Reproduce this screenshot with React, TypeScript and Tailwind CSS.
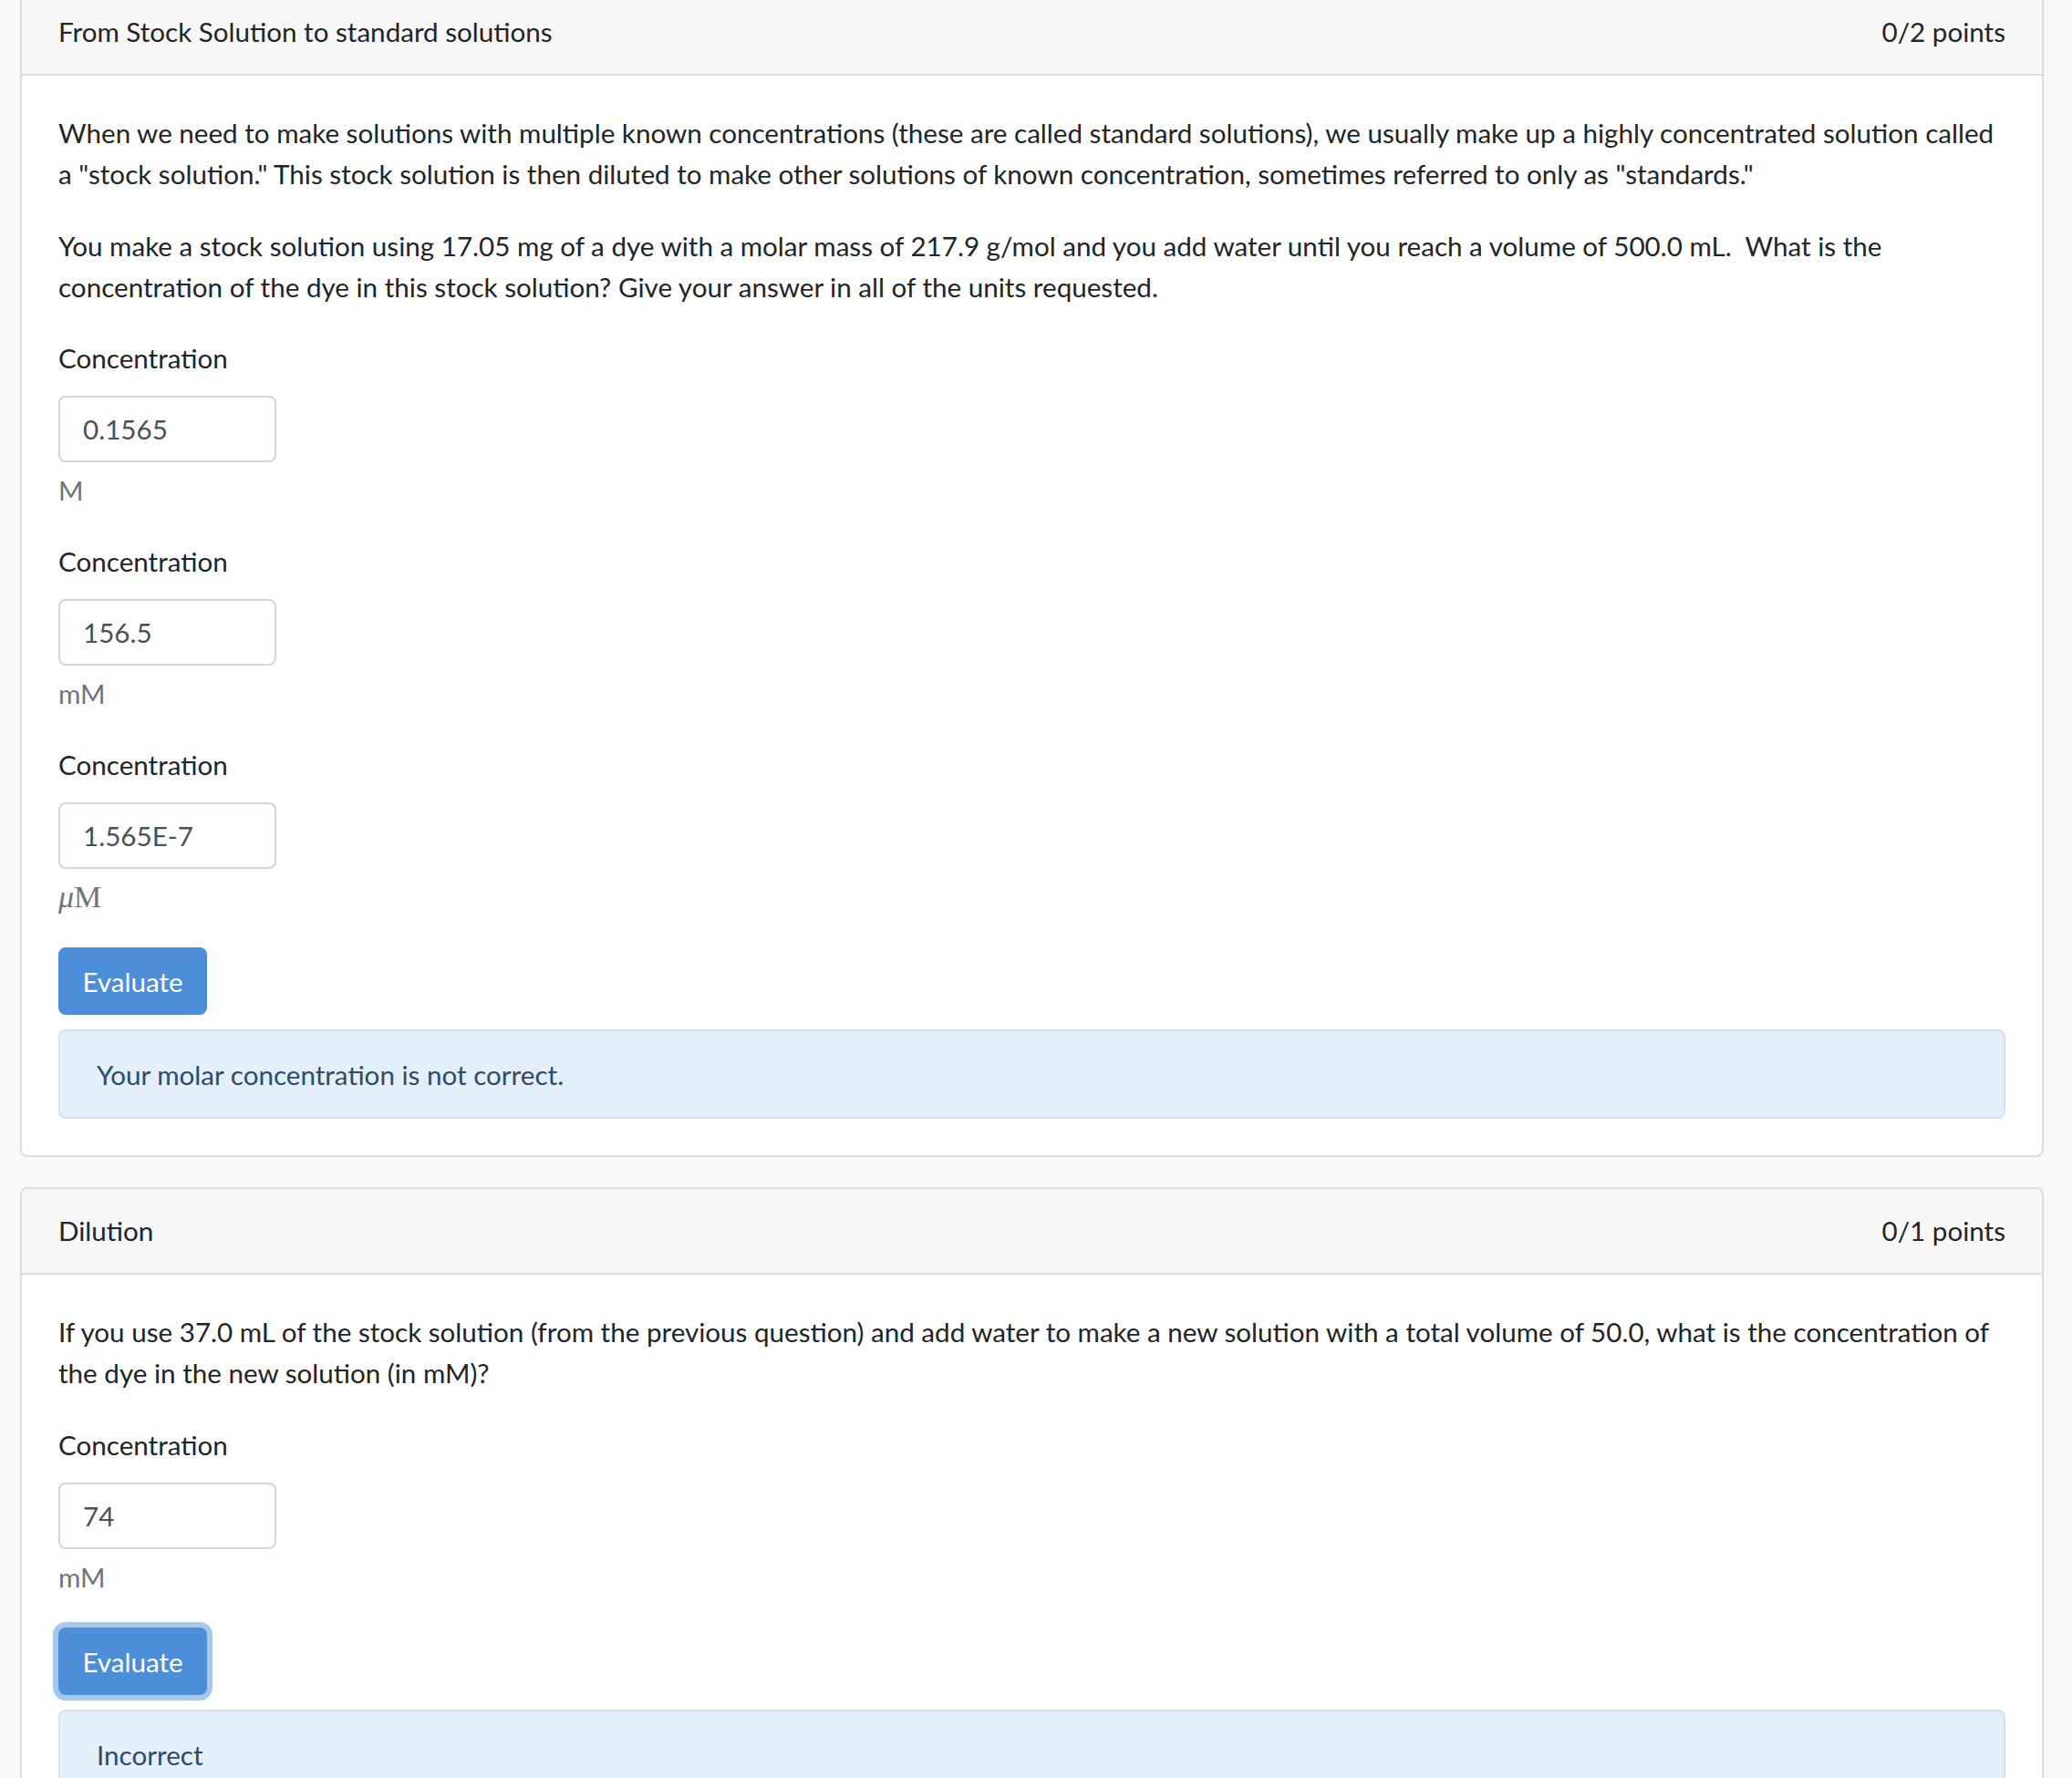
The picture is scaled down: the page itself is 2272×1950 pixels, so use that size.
import React from "react";

const font = { fontFamily: "Lato, 'Noto Sans', sans-serif" };

function Field({ value, unit, math }: { value: string; unit: string; math?: boolean }) {
  return (
    <div className="mb-[33px]">
      <div className="mb-[19px] h-[45px] leading-[45px] text-[#212529]">Concentration</div>
      <input
        readOnly
        value={value}
        className="block h-[73px] w-[239px] rounded-[8px] border-2 border-[#d2d6da] bg-white px-[25px] text-[29.6px] text-[#495057] outline-none"
      />
      {math ? (
        <div className="mt-[8px] h-[45px] leading-[45px] text-[#6c757d] text-[34px]" style={{ fontFamily: "'Liberation Serif', 'DejaVu Serif', serif" }}>
          <span className="italic">μ</span>M
        </div>
      ) : (
        <div className="mt-[8px] h-[45px] leading-[45px] text-[#6c757d]">{unit}</div>
      )}
    </div>
  );
}

function Card({
  title,
  points,
  children,
  className,
}: {
  title: string;
  points: string;
  children: React.ReactNode;
  className?: string;
}) {
  return (
    <div className={"rounded-[8px] border-2 border-[#dcdcdc] bg-white " + (className ?? "")}>
      <div className="flex h-[94px] items-center justify-between rounded-t-[6px] border-b-2 border-[#dcdcdc] bg-[#f7f7f7] px-[40px] pb-[2px] text-[#212529]">
        <span>{title}</span>
        <span>{points}</span>
      </div>
      <div className="p-[40px]">{children}</div>
    </div>
  );
}

export default function App() {
  return (
    <div
      className="h-[1950px] w-[2272px] overflow-hidden bg-[#f8f9fb] pl-[22px] pr-[31px] text-[29.6px] leading-[45px]"
      style={font}
    >
      <Card title="From Stock Solution to standard solutions" points="0/2 points" className="-mt-[13px]">
        <p className="mb-[34px] text-[#212529]">
          When we need to make solutions with multiple known concentrations (these are called standard solutions), we
          usually make up a highly concentrated solution called
          <br />a "stock solution." This stock solution is then diluted to make other solutions of known concentration,
          sometimes referred to only as "standards."
        </p>
        <p className="mb-[33px] text-[#212529]">
          You make a stock solution using 17.05 mg of a dye with a molar mass of 217.9 g/mol and you add water until you
          reach a volume of 500.0 mL.&nbsp; What is the concentration of the dye in this stock solution? Give your
          answer in all of the units requested.
        </p>
        <Field value="0.1565" unit="M" />
        <Field value="156.5" unit="mM" />
        <Field value="1.565E-7" unit="μM" math />
        <button className="block h-[74px] w-[163px] rounded-[8px] bg-[#4d8ed8] text-center text-white">Evaluate</button>
        <div className="mt-[16px] flex h-[98px] items-center rounded-[8px] border-2 border-[#d3e3f5] bg-[#e3eff9] px-[40px] text-[#2e4b6c]">
          Your molar concentration is not correct.
        </div>
      </Card>

      <Card title="Dilution" points="0/1 points" className="mt-[33px]">
        <p className="mb-[34px] text-[#212529]">
          If you use 37.0 mL of the stock solution (from the previous question) and add water to make a new solution
          with a total volume of 50.0, what is the concentration of the dye in the new solution (in mM)?
        </p>
        <Field value="74" unit="mM" />
        <button className="block h-[74px] w-[163px] rounded-[8px] bg-[#4d8ed8] text-center text-white ring-[6px] ring-[#a8c7ec]">
          Evaluate
        </button>
        <div className="mt-[16px] flex h-[98px] items-center rounded-[8px] border-2 border-[#d3e3f5] bg-[#e3eff9] px-[40px] text-[#2e4b6c]">
          Incorrect
        </div>
      </Card>
    </div>
  );
}
